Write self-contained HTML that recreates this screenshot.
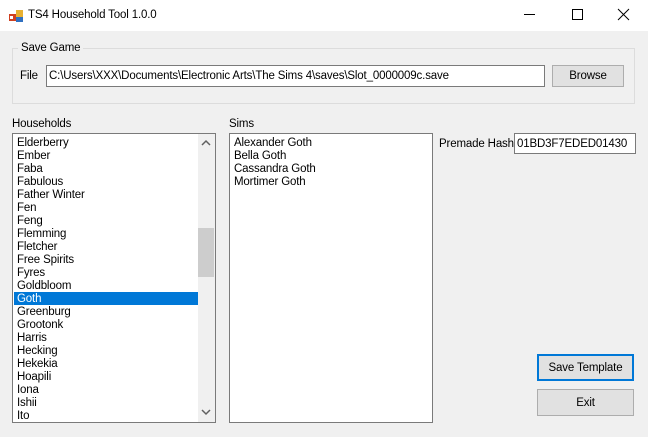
<!DOCTYPE html>
<html><head><style>
*{box-sizing:border-box;margin:0;padding:0}
body{width:648px;height:437px;background:#f0f0f0;font-family:"Liberation Sans",sans-serif;font-size:11.5px;letter-spacing:-0.15px;color:#000;position:relative;overflow:hidden}
.a{position:absolute;white-space:nowrap}
.title{left:0;top:0;width:648px;height:31px;background:#fff}
.box{background:#fff;border:1px solid #7a7a7a}
.btn{background:#e1e1e1;border:1px solid #adadad;text-align:center}
.li{height:13px;line-height:14px;padding-left:3px}
</style></head><body>
<div class="a title"></div>
<svg class="a" style="left:8px;top:8px" width="16" height="16"><rect x="1" y="6" width="7" height="7" fill="#d04020"/><rect x="8" y="2" width="7" height="7" fill="#e8b030"/><rect x="8" y="9" width="7" height="5" fill="#3070c0"/><rect x="2" y="8" width="3" height="3" fill="#fff"/></svg>
<div class="a" style="left:28px;top:9px">TS4 Household Tool 1.0.0</div>
<div class="a" style="left:524px;top:14px;width:11px;height:1px;background:#000"></div>
<div class="a" style="left:572px;top:9px;width:11px;height:11px;border:1px solid #000"></div>
<svg class="a" style="left:617px;top:8px" width="13" height="13"><path d="M1 1L12 12M12 1L1 12" stroke="#000" stroke-width="1"/></svg>
<div class="a" style="left:12px;top:48px;width:623px;height:56px;border:1px solid #dcdcdc"></div>
<div class="a" style="left:18px;top:42px;background:#f0f0f0;padding:0 3px">Save Game</div>
<div class="a" style="left:20px;top:70px">File</div>
<div class="a box" style="left:46px;top:65px;width:499px;height:22px;padding:4px 2px">C:\Users\XXX\Documents\Electronic Arts\The Sims 4\saves\Slot_0000009c.save</div>
<div class="a btn" style="left:552px;top:65px;width:72px;height:22px;line-height:21px">Browse</div>
<div class="a" style="left:12px;top:118px">Households</div>
<div class="a" style="left:229px;top:118px">Sims</div>
<div class="a box" style="left:12px;top:133px;width:204px;height:290px;padding-top:2px;padding-left:1px">
<div class="li">Elderberry</div><div class="li">Ember</div><div class="li">Faba</div><div class="li">Fabulous</div><div class="li">Father Winter</div><div class="li">Fen</div><div class="li">Feng</div><div class="li">Flemming</div><div class="li">Fletcher</div><div class="li">Free Spirits</div><div class="li">Fyres</div><div class="li">Goldbloom</div><div class="li" style="background:#0078d7;color:#fff;width:184px">Goth</div><div class="li">Greenburg</div><div class="li">Grootonk</div><div class="li">Harris</div><div class="li">Hecking</div><div class="li">Hekekia</div><div class="li">Hoapili</div><div class="li">Iona</div><div class="li">Ishii</div><div class="li">Ito</div>
</div>
<div class="a" style="left:198px;top:134px;width:17px;height:288px;background:#f0f0f0"></div>
<div class="a" style="left:198px;top:228px;width:16px;height:49px;background:#cdcdcd"></div>
<svg class="a" style="left:201px;top:139px" width="10" height="8"><path d="M1 6L5 2L9 6" stroke="#606060" stroke-width="1.5" fill="none"/></svg>
<svg class="a" style="left:201px;top:408px" width="10" height="8"><path d="M1 2L5 6L9 2" stroke="#606060" stroke-width="1.5" fill="none"/></svg>
<div class="a box" style="left:229px;top:133px;width:204px;height:290px;padding-top:2px;padding-left:1px">
<div class="li">Alexander Goth</div><div class="li">Bella Goth</div><div class="li">Cassandra Goth</div><div class="li">Mortimer Goth</div>
</div>
<div class="a" style="left:439px;top:138px">Premade Hash</div>
<div class="a box" style="left:514px;top:133px;width:122px;height:21px;padding:4px 2px">01BD3F7EDED01430</div>
<div class="a btn" style="left:537px;top:354px;width:97px;height:27px;line-height:24px;border:2px solid #0078d7">Save Template</div>
<div class="a btn" style="left:537px;top:389px;width:97px;height:27px;line-height:26px">Exit</div>
</body></html>
